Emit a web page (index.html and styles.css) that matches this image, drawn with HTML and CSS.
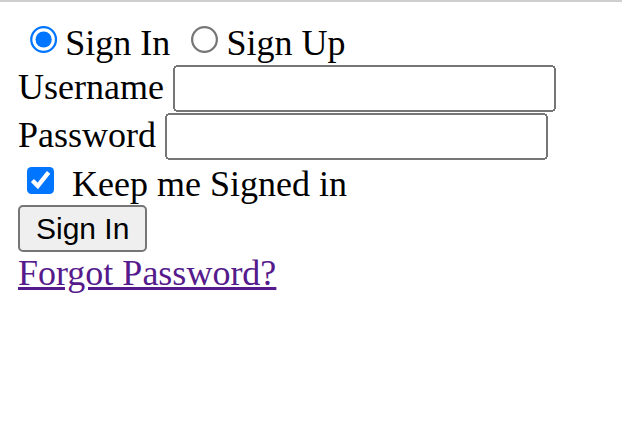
FILE: index.html
```html
<!DOCTYPE html>
<html>
<head>
<meta charset="utf-8">
<link rel="stylesheet" href="styles.css">
</head>
<body class="page">
<div class="topline"></div>
<div class="scaled">
<form class="login">
<input type="radio" name="mode" checked>Sign In <input type="radio" name="mode">Sign Up<br>
Username <input type="text" class="field"><br>
Password <input type="password" class="field"><br>
<input type="checkbox" checked> Keep me Signed in<br>
<button type="button" class="btn">Sign In</button><br>
<a href="#" class="forgot">Forgot Password?</a>
</form>
</div>
</body>
</html>
```
FILE: styles.css
```css
html, body.page {
  margin: 0;
  padding: 0;
  background: #fff;
}
.topline {
  height: 2px;
  background: #cfcfcf;
}
.scaled {
  zoom: 2.25;
  margin: 8px;
  margin-top: 7.5px;
  font-family: "Liberation Serif", "Times New Roman", serif;
  font-size: 16px;
  color: #000;
}
.login {
  margin: 0;
}
.field {
  box-sizing: border-box;
  width: 170.4px;
  height: 21px;
  margin: 0.4px 0 0;
  font-family: "Liberation Sans", Arial, sans-serif;
  font-size: 13.333px;
}
.btn {
  box-sizing: border-box;
  width: 57.5px;
  height: 21px;
  margin: 0;
  padding: 0;
  font-family: "Liberation Sans", Arial, sans-serif;
  font-size: 13.333px;
}
.forgot {
  color: #551a8b;
}
```
